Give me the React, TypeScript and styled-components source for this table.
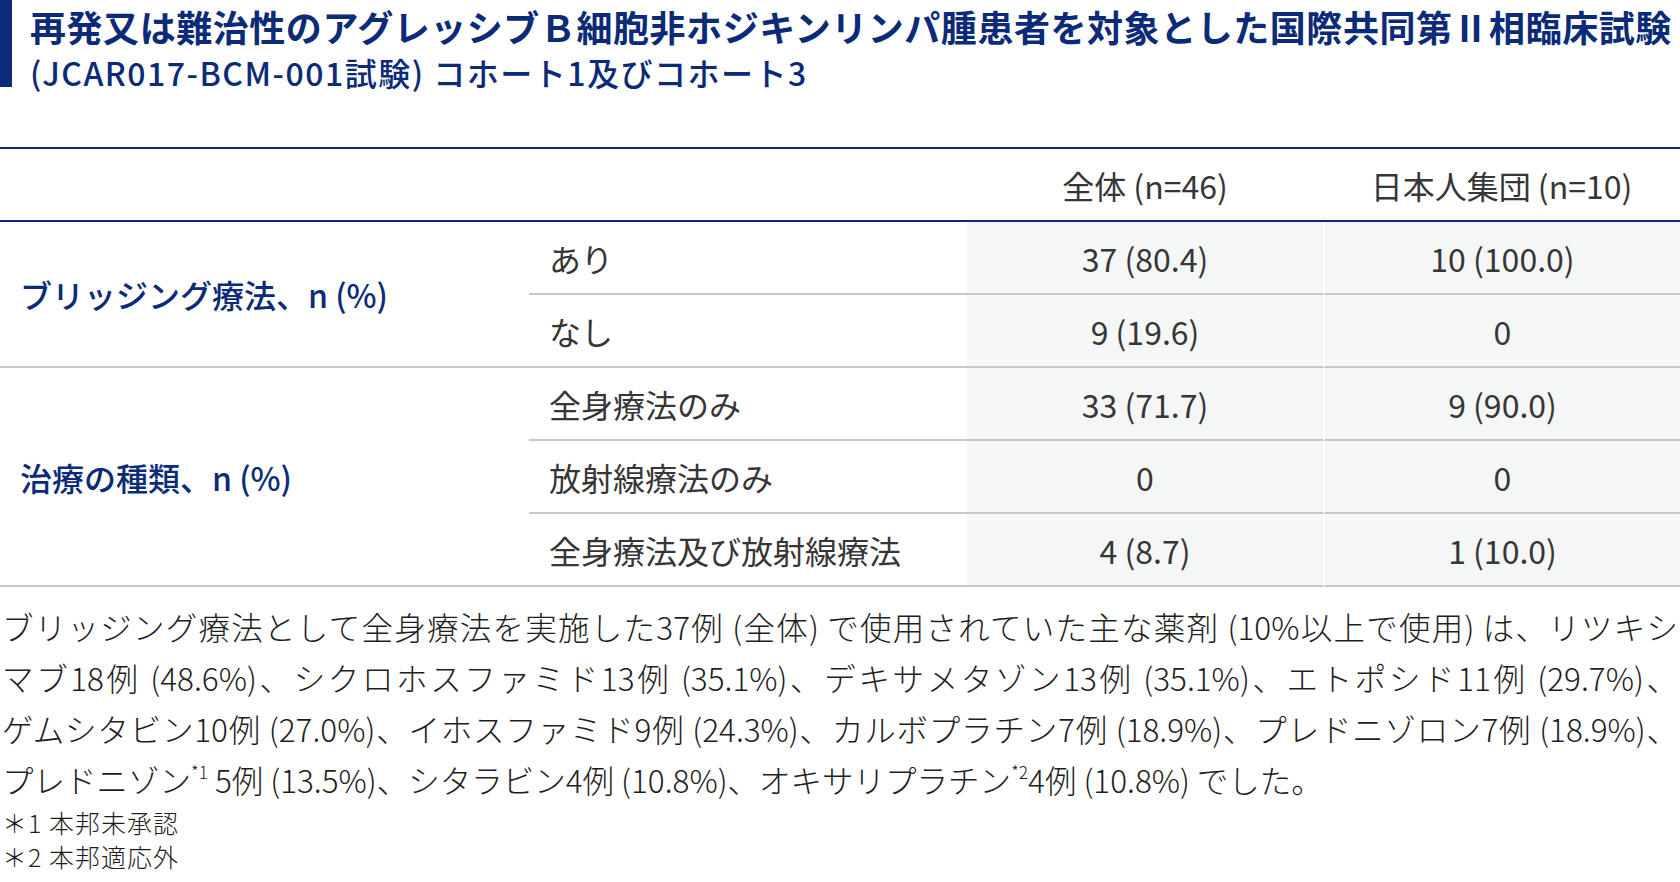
import React from "react";
import styled, { createGlobalStyle } from "styled-components";

const NAVY = "#0b2a78";
const TEXT = "#363636";
const RULE = "#c8c8c8";
const CELL_BG = "#f5f6f6";

const GlobalStyle = createGlobalStyle`
  html, body {
    margin: 0;
    padding: 0;
    background: #ffffff;
  }
  body {
    font-family: "Noto Sans CJK JP", "Noto Sans", sans-serif;
    -webkit-font-smoothing: antialiased;
  }
`;

const Page = styled.div`
  width: 1680px;
  overflow: hidden;
`;

const TitleBlock = styled.header`
  display: flex;
  align-items: flex-start;
  gap: 18px;
`;

const Bar = styled.div`
  flex: none;
  width: 12px;
  height: 87px;
  background: ${NAVY};
`;

const TitleText = styled.div`
  flex: 1;
  min-width: 0;
  display: flex;
  flex-direction: column;
  padding-top: 4px;
  color: ${NAVY};
`;

const TitleMain = styled.h1`
  margin: 0;
  font-size: 36px;
  font-weight: 700;
  line-height: 45px;
  letter-spacing: 0.55px;
  white-space: nowrap;
`;

const TitleSub = styled.p`
  margin: 0;
  font-size: 32px;
  font-weight: 500;
  line-height: 47px;
  white-space: nowrap;
  letter-spacing: 1.5px;
`;

const Table = styled.table`
  margin-top: 51px;
  width: 1680px;
  table-layout: fixed;
  border-collapse: separate;
  border-spacing: 0;
  font-size: 32px;
  color: ${TEXT};
`;

const HeadCell = styled.th`
  box-sizing: border-box;
  height: 75px;
  padding: 0;
  border-top: 2px solid ${NAVY};
  border-bottom: 2px solid ${NAVY};
  font-weight: 400;
  text-align: center;
  vertical-align: middle;
  white-space: nowrap;
`;

const GroupCell = styled.td`
  padding: 0 0 0 20px;
  border-bottom: 2px solid ${RULE};
  color: ${NAVY};
  font-weight: 500;
  text-align: left;
  vertical-align: middle;
  white-space: nowrap;
`;

const SubCell = styled.td`
  box-sizing: border-box;
  height: 73px;
  padding: 0 0 0 20px;
  border-bottom: 2px solid ${RULE};
  font-weight: 400;
  text-align: left;
  vertical-align: middle;
  white-space: nowrap;
`;

const ValueCell = styled.td<{ $divider?: boolean }>`
  box-sizing: border-box;
  height: 73px;
  padding: 0;
  background: ${CELL_BG};
  border-bottom: 2px solid ${RULE};
  border-left: ${(p) => (p.$divider ? "2px solid #ffffff" : "0")};
  font-weight: 400;
  text-align: center;
  vertical-align: middle;
  white-space: nowrap;
`;

const Note = styled.div`
  margin: 14px 0 0 2px;
  width: 1676px;
  font-size: 31.5px;
  font-weight: 300;
  line-height: 51px;
  color: #1e1e1e;
`;

const NoteLine = styled.span<{ $justify?: boolean }>`
  display: block;
  white-space: nowrap;
  text-align: ${(p) => (p.$justify ? "justify" : "left")};
  text-align-last: ${(p) => (p.$justify ? "justify" : "left")};
  text-justify: inter-character;
`;

const Sup = styled.sup`
  font-size: 0.55em;
  line-height: 0;
  vertical-align: 0.8em;
`;

const Footnotes = styled.div`
  margin-left: 2px;
  font-size: 25px;
  font-weight: 300;
  line-height: 34px;
  letter-spacing: 1px;
  color: #1e1e1e;
`;

const Footnote = styled.div`
  white-space: nowrap;
`;

type Row = { sub: string; all: string; jp: string };
type Group = { label: string; rows: Row[] };

const groups: Group[] = [
  {
    label: "ブリッジング療法、n (%)",
    rows: [
      { sub: "あり", all: "37 (80.4)", jp: "10 (100.0)" },
      { sub: "なし", all: "9 (19.6)", jp: "0" },
    ],
  },
  {
    label: "治療の種類、n (%)",
    rows: [
      { sub: "全身療法のみ", all: "33 (71.7)", jp: "9 (90.0)" },
      { sub: "放射線療法のみ", all: "0", jp: "0" },
      { sub: "全身療法及び放射線療法", all: "4 (8.7)", jp: "1 (10.0)" },
    ],
  },
];

export default function App() {
  return (
    <Page>
      <GlobalStyle />
      <TitleBlock>
        <Bar />
        <TitleText>
          <TitleMain>
            再発又は難治性のアグレッシブＢ細胞非ホジキンリンパ腫患者を対象とした国際共同第Ⅱ相臨床試験
          </TitleMain>
          <TitleSub>(JCAR017-BCM-001試験) コホート1及びコホート3</TitleSub>
        </TitleText>
      </TitleBlock>

      <Table>
        <colgroup>
          <col style={{ width: 529 }} />
          <col style={{ width: 438 }} />
          <col style={{ width: 356 }} />
          <col style={{ width: 357 }} />
        </colgroup>
        <thead>
          <tr>
            <HeadCell />
            <HeadCell />
            <HeadCell>全体 (n=46)</HeadCell>
            <HeadCell>日本人集団 (n=10)</HeadCell>
          </tr>
        </thead>
        <tbody>
          {groups.map((g) =>
            g.rows.map((r, i) => (
              <tr key={g.label + r.sub}>
                {i === 0 && <GroupCell rowSpan={g.rows.length}>{g.label}</GroupCell>}
                <SubCell>{r.sub}</SubCell>
                <ValueCell>{r.all}</ValueCell>
                <ValueCell $divider>{r.jp}</ValueCell>
              </tr>
            ))
          )}
        </tbody>
      </Table>

      <Note>
        <NoteLine $justify>
          ブリッジング療法として全身療法を実施した37例 (全体) で使用されていた主な薬剤 (10%以上で使用) は、リツキシ
        </NoteLine>
        <NoteLine $justify>
          マブ18例 (48.6%)、シクロホスファミド13例 (35.1%)、デキサメタゾン13例 (35.1%)、エトポシド11例 (29.7%)、
        </NoteLine>
        <NoteLine $justify>
          ゲムシタビン10例 (27.0%)、イホスファミド9例 (24.3%)、カルボプラチン7例 (18.9%)、プレドニゾロン7例 (18.9%)、
        </NoteLine>
        <NoteLine>
          プレドニゾン<Sup>*1</Sup> 5例 (13.5%)、シタラビン4例 (10.8%)、オキサリプラチン<Sup>*2</Sup>4例 (10.8%) でした。
        </NoteLine>
      </Note>
      <Footnotes>
        <Footnote>＊1 本邦未承認</Footnote>
        <Footnote>＊2 本邦適応外</Footnote>
      </Footnotes>
    </Page>
  );
}
